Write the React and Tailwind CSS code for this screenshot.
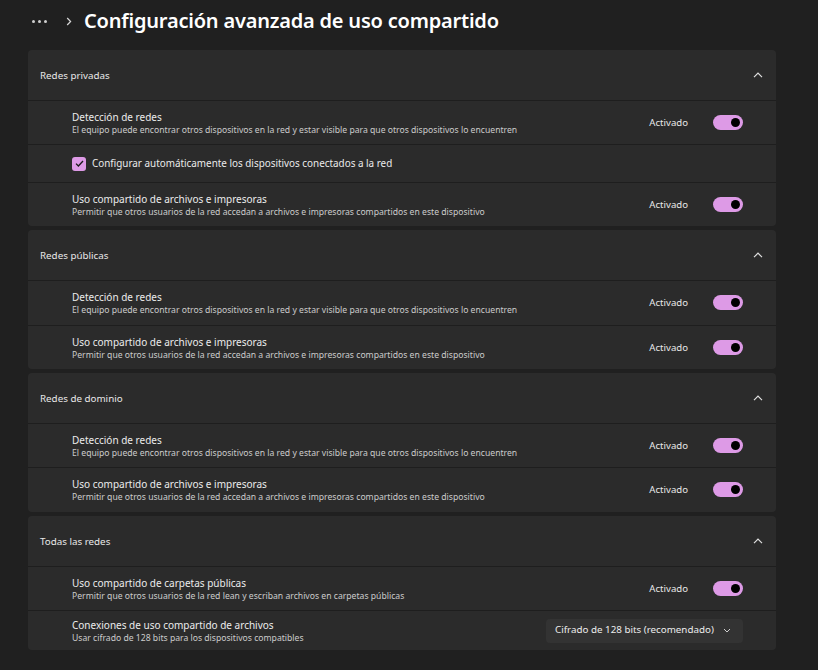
import React from "react";

const font = { fontFamily: '"Noto Sans", "Open Sans", sans-serif' };

function Toggle() {
  return (
    <div className="flex items-center">
      <span className="text-[9.6px] text-[#e8e8e8] mr-[25px] pt-[1px]">Activado</span>
      <div className="w-[30px] h-[15px] rounded-full bg-[#dd9ae6] flex items-center justify-end pr-[3px]">
        <div className="w-[9px] h-[9px] rounded-full bg-black" />
      </div>
    </div>
  );
}

function Row({ title, desc, h = "h-[44px]", right }) {
  return (
    <div className={`flex items-center border-t border-[#1e1e1e] pl-[44px] pr-[33px] ${h}`}>
      <div className="flex-1 flex flex-col leading-none pt-[1px]">
        <span className="text-[10px] text-[#ececec] whitespace-nowrap">{title}</span>
        <span className="text-[8.65px] text-[#cccccc] mt-[4px] whitespace-nowrap">{desc}</span>
      </div>
      {right}
    </div>
  );
}

function Header({ title }) {
  return (
    <div className="h-[50px] flex items-center justify-between pl-[12px] pr-[13px]">
      <span className="text-[9.8px] text-[#e8e8e8] pt-[2px]">{title}</span>
      <svg width="10" height="6" viewBox="0 0 10 6" fill="none">
        <path d="M1 5.2 L5 1.2 L9 5.2" stroke="#e0e0e0" strokeWidth="1.2" />
      </svg>
    </div>
  );
}

const DET_T = "Detección de redes";
const DET_D = "El equipo puede encontrar otros dispositivos en la red y estar visible para que otros dispositivos lo encuentren";
const USO_T = "Uso compartido de archivos e impresoras";
const USO_D = "Permitir que otros usuarios de la red accedan a archivos e impresoras compartidos en este dispositivo";

export default function App() {
  return (
    <div className="w-[818px] h-[670px] bg-[#202020] overflow-hidden" style={font}>
      <div className="flex items-center h-[42px] pl-[32px]">
        <div className="flex gap-[3px] items-center">
          <span className="w-[3px] h-[3px] rounded-full bg-[#cfcfcf]" />
          <span className="w-[3px] h-[3px] rounded-full bg-[#cfcfcf]" />
          <span className="w-[3px] h-[3px] rounded-full bg-[#cfcfcf]" />
        </div>
        <svg className="ml-[19px]" width="6" height="9" viewBox="0 0 6 9" fill="none">
          <path d="M1.2 1 L4.6 4.5 L1.2 8" stroke="#d8d8d8" strokeWidth="1.2" />
        </svg>
        <h1 className="ml-[12px] text-[20px] font-semibold text-white tracking-[-0.2px]">
          Configuración avanzada de uso compartido
        </h1>
      </div>
      <div className="flex flex-col gap-[4px] ml-[28px] mt-[8px] w-[748px]">
        <div className="bg-[#2b2b2b] rounded-[4px]">
          <Header title="Redes privadas" />
          <Row title={DET_T} desc={DET_D} h="h-[44px]" right={<Toggle />} />
          <div className="flex items-center h-[38px] border-t border-[#1e1e1e] pl-[44px]">
            <div className="w-[14px] h-[14px] rounded-[3px] bg-[#dd9ae6] flex items-center justify-center">
              <svg width="9" height="7" viewBox="0 0 9 7" fill="none">
                <path d="M1 3.6 L3.4 6 L8 1" stroke="#1a1a1a" strokeWidth="1.3" />
              </svg>
            </div>
            <span className="ml-[6px] text-[9.9px] text-[#ececec]">
              Configurar automáticamente los dispositivos conectados a la red
            </span>
          </div>
          <Row title={USO_T} desc={USO_D} h="h-[44px]" right={<Toggle />} />
        </div>
        <div className="bg-[#2b2b2b] rounded-[4px]">
          <Header title="Redes públicas" />
          <Row title={DET_T} desc={DET_D} h="h-[45px]" right={<Toggle />} />
          <Row title={USO_T} desc={USO_D} h="h-[44px]" right={<Toggle />} />
        </div>
        <div className="bg-[#2b2b2b] rounded-[4px]">
          <Header title="Redes de dominio" />
          <Row title={DET_T} desc={DET_D} h="h-[44px]" right={<Toggle />} />
          <Row title={USO_T} desc={USO_D} h="h-[45px]" right={<Toggle />} />
        </div>
        <div className="bg-[#2b2b2b] rounded-[4px]">
          <Header title="Todas las redes" />
          <Row
            title="Uso compartido de carpetas públicas"
            desc="Permitir que otros usuarios de la red lean y escriban archivos en carpetas públicas"
            h="h-[44px]"
            right={<Toggle />}
          />
          <Row
            title="Conexiones de uso compartido de archivos"
            desc="Usar cifrado de 128 bits para los dispositivos compatibles"
            h="h-[40px]"
            right={
              <div className="w-[197px] h-[24px] rounded-[4px] bg-[#333333] flex items-center justify-between pl-[9px] pr-[12px]">
                <span className="text-[9.8px] text-[#ececec] whitespace-nowrap">Cifrado de 128 bits (recomendado)</span>
                <svg width="8" height="5" viewBox="0 0 8 5" fill="none">
                  <path d="M1 1 L4 4 L7 1" stroke="#cfcfcf" strokeWidth="1" />
                </svg>
              </div>
            }
          />
        </div>
      </div>
    </div>
  );
}
